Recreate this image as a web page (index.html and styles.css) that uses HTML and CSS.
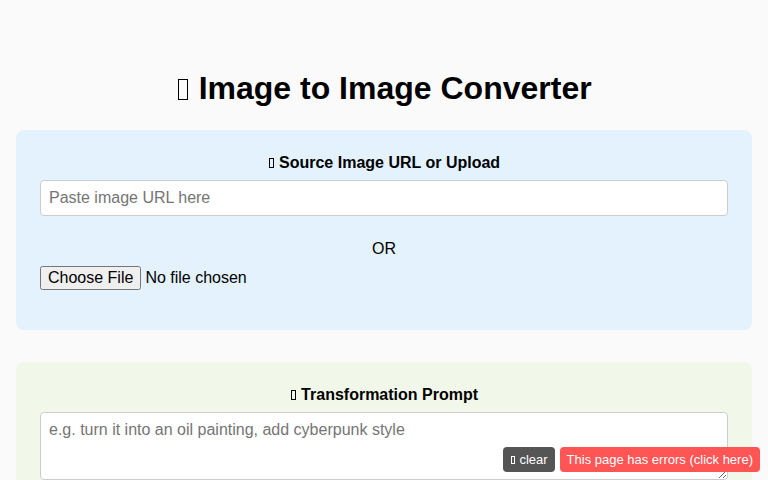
FILE: index.html
```html
<!DOCTYPE html>
<html>
<head>
<meta charset="utf-8">
<link rel="stylesheet" href="styles.css">
</head>
<body>
<div class="container">
  <h1 class="title"><span class="tofu"></span> Image to Image Converter</h1>
  <section class="card card-source">
    <label class="label"><span class="tofu"></span> Source Image URL or Upload</label>
    <input class="text-input" type="text" placeholder="Paste image URL here">
    <div class="or">OR</div>
    <input class="file-input" type="file">
  </section>
  <section class="card card-prompt">
    <label class="label"><span class="tofu"></span> Transformation Prompt</label>
    <textarea class="prompt" placeholder="e.g. turn it into an oil painting, add cyberpunk style"></textarea>
  </section>
</div>
<div class="overlay">
  <button class="btn-clear"><span class="tofu"></span> clear</button>
  <button class="btn-errors">This page has errors (click here)</button>
</div>
</body>
</html>
```

FILE: styles.css
```css
* { box-sizing: border-box; }
html, body { margin: 0; padding: 0; }
body {
  background: #fafafa;
  font-family: "Liberation Sans", Arial, sans-serif;
  color: #000;
}
.container {
  padding: 70px 16px 16px;
}
.tofu {
  display: inline-block;
  width: 0.3em;
  height: 0.64em;
  border: 1px solid currentColor;
  margin: 0 0.06em;
  vertical-align: -0.02em;
}
.title {
  margin: 0 0 23px;
  font-size: 32px;
  line-height: 37px;
  font-weight: bold;
  text-align: center;
}
.card {
  border-radius: 8px;
  padding: 24px;
  margin-bottom: 32px;
  display: flex;
  flex-direction: column;
}
.card-source { background: #e3f2fd; padding-bottom: 40px; }
.card-prompt { background: #f1f8e9; }
.label {
  display: block;
  text-align: center;
  font-weight: bold;
  font-size: 16px;
  line-height: 18px;
  margin: 0 0 8px;
}
.text-input, .prompt {
  width: 100%;
  font-family: "Liberation Sans", Arial, sans-serif;
  font-size: 16px;
  padding: 8px;
  border: 1px solid #ccc;
  border-radius: 4px;
  background: #fff;
  color: #000;
}
.text-input { height: 36px; }
.text-input::placeholder, .prompt::placeholder { color: #757575; }
.or {
  text-align: center;
  font-size: 16px;
  line-height: 18px;
  margin: 24px 0 8px;
}
.file-input {
  font-family: "Liberation Sans", Arial, sans-serif;
  font-size: 16px;
  height: 24px;
}
.prompt {
  height: 68px;
  resize: vertical;
}
.overlay {
  position: fixed;
  right: 8px;
  bottom: 8px;
  display: flex;
  gap: 5px;
}
.overlay button {
  border: none;
  border-radius: 4px;
  color: #fff;
  font-family: "Liberation Sans", Arial, sans-serif;
  font-size: 13px;
  height: 25px;
  padding: 0 7px;
  cursor: pointer;
}
.btn-clear { background: #555; }
.btn-errors { background: #ff5555; }
```
